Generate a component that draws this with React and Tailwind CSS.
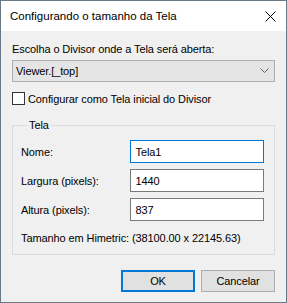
import React from "react";

export default function App() {
  const font = { fontFamily: '"Segoe UI", "Liberation Sans", Arial, sans-serif' };
  return (
    <div
      className="w-[287px] h-[303px] border border-[#6b7886] bg-[#f0f0f0] flex flex-col text-[11px] leading-[16px] text-black"
      style={font}
    >
      <div className="h-[30px] bg-white flex items-center justify-between pl-[9px] pr-[10px] shrink-0">
        <span className="text-[11.5px]">Configurando o tamanho da Tela</span>
        <svg width="11" height="11" viewBox="0 0 11 11" className="mt-[1px]">
          <path d="M0.5 0.5 L10.5 10.5 M10.5 0.5 L0.5 10.5" stroke="#000" strokeWidth="1" fill="none" />
        </svg>
      </div>
      <div className="flex flex-col px-[11px] pt-[10px] tracking-[-0.1px]">
        <div className="h-[16px] whitespace-nowrap">Escolha o Divisor onde a Tela será aberta:</div>
        <div className="mt-[3px] h-[22px] bg-[#e5e5e5] border border-[#adadad] flex items-center justify-between pl-[3px] pr-[5px]">
          <span>Viewer.[_top]</span>
          <svg width="9" height="6" viewBox="0 0 9 6">
            <path d="M0.5 0.5 L4.5 4.5 L8.5 0.5" stroke="#606060" strokeWidth="1" fill="none" />
          </svg>
        </div>
        <div className="mt-[10px] h-[13px] flex items-center gap-[3px]">
          <div className="w-[13px] h-[13px] border border-[#333] bg-white shrink-0" />
          <span className="whitespace-nowrap">Configurar como Tela inicial do Divisor</span>
        </div>
        <fieldset className="mt-[12px] border border-[#dcdcdc] pl-[8px] pr-[10px] pb-[8px] m-0 min-w-0">
          <legend className="ml-[6px] px-[2px] leading-[16px]">Tela</legend>
          <div className="flex flex-col gap-[6px] mt-[7px]">
            <div className="flex items-center">
              <div className="w-[109px] whitespace-nowrap">Nome:</div>
              <div className="w-[135px] h-[23px] border border-[#0078d7] bg-white flex items-center pl-[5px]">Tela1</div>
            </div>
            <div className="flex items-center">
              <div className="w-[109px] whitespace-nowrap">Largura (pixels):</div>
              <div className="w-[135px] h-[23px] border border-[#7a7a7a] bg-white flex items-center pl-[5px]">1440</div>
            </div>
            <div className="flex items-center">
              <div className="w-[109px] whitespace-nowrap">Altura (pixels):</div>
              <div className="w-[135px] h-[23px] border border-[#7a7a7a] bg-white flex items-center pl-[5px]">837</div>
            </div>
          </div>
          <div className="mt-[9px] whitespace-nowrap">Tamanho em Himetric: (38100.00 x 22145.63)</div>
        </fieldset>
        <div className="mt-[15px] flex justify-end gap-[6px]">
          <div className="w-[74px] h-[22px] border-2 border-[#0078d7] bg-[#e1e1e1] flex items-center justify-center">OK</div>
          <div className="w-[74px] h-[22px] border border-[#adadad] bg-[#e1e1e1] flex items-center justify-center">Cancelar</div>
        </div>
      </div>
    </div>
  );
}
